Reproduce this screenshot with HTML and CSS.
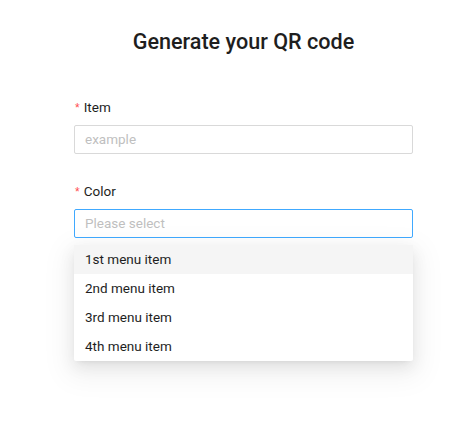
FILE: index.html
```html
<!DOCTYPE html>
<html>
<head>
<meta charset="utf-8">
<link rel="stylesheet" href="styles.css">
</head>
<body>
<div class="page">
  <h1 class="title">Generate your QR code</h1>
  <form class="form">
    <div class="field">
      <label class="label"><span class="req">*</span>Item</label>
      <div class="input">example</div>
    </div>
    <div class="field">
      <label class="label"><span class="req">*</span>Color</label>
      <div class="select-wrap">
        <div class="input focused">Please select</div>
        <ul class="menu">
          <li class="menu-item active">1st menu item</li>
          <li class="menu-item">2nd menu item</li>
          <li class="menu-item">3rd menu item</li>
          <li class="menu-item">4th menu item</li>
        </ul>
      </div>
    </div>
  </form>
</div>
</body>
</html>
```
FILE: styles.css
```css
* { box-sizing: border-box; }
html, body { margin: 0; padding: 0; background: #fff; }
body {
  font-family: Roboto, "Liberation Sans", sans-serif;
  color: rgba(0,0,0,0.85);
}
.page {
  width: 474px;
  height: 437px;
  padding: 26px 61px 0 74px;
}
.title {
  margin: 0;
  font-size: 21.6px;
  font-weight: 500;
  line-height: 32px;
  text-align: center;
  color: #1e1e1e;
}
.form {
  margin-top: 38px;
  display: flex;
  flex-direction: column;
  gap: 26px;
}
.field {
  display: flex;
  flex-direction: column;
  gap: 6px;
}
.label {
  font-size: 13.5px;
  line-height: 22px;
  color: #1e1e1e;
  padding-left: 1px;
}
.req {
  color: #ff4d4f;
  font-size: 12px;
  margin-right: 4px;
  font-family: SimSun, "Liberation Sans", sans-serif;
}
.input {
  height: 29px;
  border: 1px solid #d9d9d9;
  border-radius: 2px;
  padding: 0 10px;
  font-size: 13.5px;
  line-height: 27px;
  color: #bfbfbf;
}
.input.focused {
  border-color: #40a9ff;
}
.select-wrap {
  position: relative;
}
.menu {
  position: absolute;
  left: 0;
  right: 0;
  top: 36px;
  margin: 0;
  padding: 0;
  list-style: none;
  background: #fff;
  border-radius: 2px;
  box-shadow: 0 3px 6px -4px rgba(0,0,0,.12), 0 6px 16px 0 rgba(0,0,0,.08), 0 9px 28px 8px rgba(0,0,0,.05);
}
.menu-item {
  height: 29px;
  line-height: 29px;
  padding: 0 11px;
  font-size: 13.5px;
  color: #1e1e1e;
}
.menu-item.active {
  background: #f5f5f5;
}
```
